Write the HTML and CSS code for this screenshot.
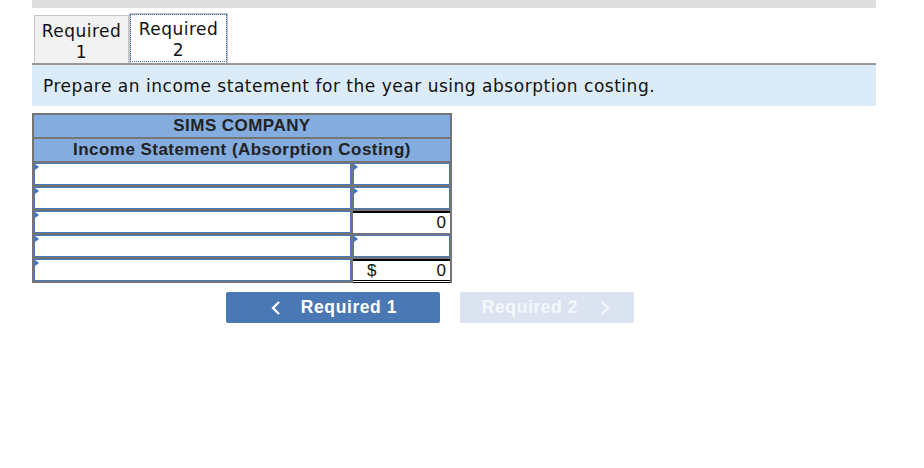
FILE: index.html
```html
<!DOCTYPE html>
<html>
<head>
<meta charset="utf-8">
<link rel="stylesheet" href="styles.css">
</head>
<body>
<div class="page">
  <div class="topbar"></div>
  <div class="tabs">
    <div class="tab">Required<br>1</div>
    <div class="tab active">Required<br>2</div>
  </div>
  <div class="instruction">Prepare an income statement for the year using absorption costing.</div>
  <div class="sheet">
    <div class="head">SIMS COMPANY</div>
    <div class="head">Income Statement (Absorption Costing)</div>
    <div class="row"><div class="cell label mark"></div><div class="cell amt mark"></div></div>
    <div class="row"><div class="cell label mark"></div><div class="cell amt mark"></div></div>
    <div class="row"><div class="cell label mark"></div><div class="cell amt total"><span></span><span>0</span></div></div>
    <div class="row"><div class="cell label mark"></div><div class="cell amt mark"></div></div>
    <div class="row"><div class="cell label mark"></div><div class="cell amt total final"><span class="dollar">$</span><span>0</span></div></div>
  </div>
  <div class="nav">
    <button class="btn prev"><svg width="10" height="16" viewBox="0 0 10 16"><path d="M8 2 L2 8 L8 14" fill="none" stroke="#fff" stroke-width="2.2"/></svg><span>Required 1</span></button>
    <button class="btn next"><span>Required 2</span><svg width="10" height="16" viewBox="0 0 10 16"><path d="M2 2 L8 8 L2 14" fill="none" stroke="#fff" stroke-width="2.2"/></svg></button>
  </div>
</div>
</body>
</html>
```
FILE: styles.css
```css
html, body { margin: 0; padding: 0; background: #fff; }
.page { padding: 0 48px 0 32px; width: 844px; }
.topbar { height: 8px; background: #dedede; }
.tabs { display: flex; align-items: flex-end; padding: 0 0 0 2px; border-bottom: 2px solid #9a9a9a; height: 57px; box-sizing: border-box; }
.tab {
  font-family: "DejaVu Sans", Verdana, sans-serif; font-size: 17px; letter-spacing: 0.5px; line-height: 21px;
  text-align: center; color: #111; background: #f2f2f2;
  border: 1px solid #c4c4c4; border-bottom: none; width: 95px; height: 48px; box-sizing: border-box; padding-top: 5px;
}
.tab.active { background: #fff; height: 50px; width: 99px; outline: 1px dotted #3a6fc0; outline-offset: -2px; border: 2px solid #c4c4c4; border-bottom: none; padding-top: 4px; }
.instruction {
  background: #dcebf8; height: 41px; box-sizing: border-box; padding: 11px 0 0 11px;
  font-family: "DejaVu Sans", Verdana, sans-serif; font-size: 17px; letter-spacing: 0.52px; color: #111;
}
.sheet { margin-top: 7px; width: 420px; background: #747474; padding: 2px; box-sizing: border-box; display: flex; flex-direction: column; gap: 2px; }
.head { background: #84acdf; height: 22px; text-align: center; font-family: "Liberation Sans", Arial, sans-serif; font-weight: bold; font-size: 17px; letter-spacing: 0.45px; line-height: 22px; color: #222; }
.row { display: flex; gap: 2px; height: 22px; }
.cell { background: #fff; border: 1px solid #4a78b8; box-sizing: border-box; height: 22px; position: relative; font-family: "Liberation Sans", Arial, sans-serif; font-size: 17px; line-height: 20px; color: #111; }
.label { width: 317px; }
.amt { width: 97px; display: flex; justify-content: space-between; padding: 0 4px 0 14px; }
.mark::before { content: ""; position: absolute; left: 0; top: 0; border-left: 4px solid #3d72c4; border-top: 3px solid transparent; border-bottom: 3px solid transparent; }
.total { border: none; border-top: 2px solid #000; line-height: 20px; }
.final { border-bottom: 3px double #000; height: 24px; line-height: 19px; margin-bottom: -2px; }
.nav { display: flex; gap: 20px; padding: 9px 0 0 194px; }
.btn { border: none; border-radius: 2px; height: 31px; display: flex; align-items: center; justify-content: center; gap: 20px; font-family: "Liberation Sans", Arial, sans-serif; font-weight: bold; font-size: 17.5px; letter-spacing: 0.6px; color: #fff; padding: 0; }
.prev { width: 214px; background: #4a78b5; padding-left: 2px; }
.next { width: 174px; background: #dae3ef; color: #f4f7fb; gap: 22px; padding-right: 2px; }
.next svg path { stroke: #f4f7fb; }
```
